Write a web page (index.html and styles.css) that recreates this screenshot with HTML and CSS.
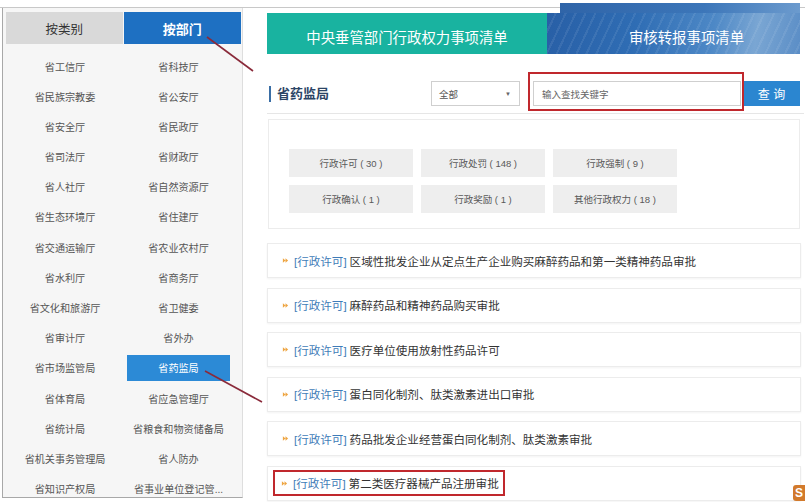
FILE: index.html
```html
<!DOCTYPE html>
<html lang="zh-CN">
<head>
<meta charset="utf-8">
<title>省药监局</title>
<link rel="stylesheet" href="styles.css">
</head>
<body>
<div class="page">
  <aside class="sidebar">
    <div class="tabs">
      <div class="tab">按类别</div>
      <div class="tab active">按部门</div>
    </div>
    <ul class="dept-grid">
      <li>省工信厅</li><li>省科技厅</li>
      <li>省民族宗教委</li><li>省公安厅</li>
      <li>省安全厅</li><li>省民政厅</li>
      <li>省司法厅</li><li>省财政厅</li>
      <li>省人社厅</li><li>省自然资源厅</li>
      <li>省生态环境厅</li><li>省住建厅</li>
      <li>省交通运输厅</li><li>省农业农村厅</li>
      <li>省水利厅</li><li>省商务厅</li>
      <li>省文化和旅游厅</li><li>省卫健委</li>
      <li>省审计厅</li><li>省外办</li>
      <li>省市场监管局</li><li class="current">省药监局</li>
      <li>省体育局</li><li>省应急管理厅</li>
      <li>省统计局</li><li>省粮食和物资储备局</li>
      <li>省机关事务管理局</li><li>省人防办</li>
      <li>省知识产权局</li><li>省事业单位登记管...</li>
    </ul>
  </aside>

  <main class="main">
    <div class="header-tabs">
      <div class="htab teal">中央垂管部门行政权力事项清单</div>
      <div class="htab photo">审核转报事项清单</div>
    </div>

    <div class="title-row">
      <h2 class="title">省药监局</h2>
      <div class="select"><span>全部</span><span class="caret">▼</span></div>
      <div class="search">
        <div class="input">输入查找关键字</div>
        <div class="btn">查 询</div>
        <span class="annot-box"></span>
      </div>
    </div>

    <div class="cats">
      <div class="cat">行政许可 ( 30 )</div>
      <div class="cat">行政处罚 ( 148 )</div>
      <div class="cat">行政强制 ( 9 )</div>
      <div class="cat">行政确认 ( 1 )</div>
      <div class="cat">行政奖励 ( 1 )</div>
      <div class="cat">其他行政权力 ( 18 )</div>
    </div>

    <ul class="items">
      <li><span class="row"><svg class="ico" viewBox="0 0 8 8"><path d="M1 1.5 L4 4 L1 6.5 Z M4 1.5 L7 4 L4 6.5 Z" fill="#eea542"/></svg><span class="tag">[行政许可]</span> 区域性批发企业从定点生产企业购买麻醉药品和第一类精神药品审批</span></li>
      <li><span class="row"><svg class="ico" viewBox="0 0 8 8"><path d="M1 1.5 L4 4 L1 6.5 Z M4 1.5 L7 4 L4 6.5 Z" fill="#eea542"/></svg><span class="tag">[行政许可]</span> 麻醉药品和精神药品购买审批</span></li>
      <li><span class="row"><svg class="ico" viewBox="0 0 8 8"><path d="M1 1.5 L4 4 L1 6.5 Z M4 1.5 L7 4 L4 6.5 Z" fill="#eea542"/></svg><span class="tag">[行政许可]</span> 医疗单位使用放射性药品许可</span></li>
      <li><span class="row"><svg class="ico" viewBox="0 0 8 8"><path d="M1 1.5 L4 4 L1 6.5 Z M4 1.5 L7 4 L4 6.5 Z" fill="#eea542"/></svg><span class="tag">[行政许可]</span> 蛋白同化制剂、肽类激素进出口审批</span></li>
      <li><span class="row"><svg class="ico" viewBox="0 0 8 8"><path d="M1 1.5 L4 4 L1 6.5 Z M4 1.5 L7 4 L4 6.5 Z" fill="#eea542"/></svg><span class="tag">[行政许可]</span> 药品批发企业经营蛋白同化制剂、肽类激素审批</span></li>
      <li><span class="row hl"><svg class="ico" viewBox="0 0 8 8"><path d="M1 1.5 L4 4 L1 6.5 Z M4 1.5 L7 4 L4 6.5 Z" fill="#eea542"/></svg><span class="tag">[行政许可]</span> 第二类医疗器械产品注册审批</span></li>
    </ul>
  </main>

  <svg class="arrows" width="805" height="502" viewBox="0 0 805 502">
    <line x1="207" y1="29" x2="253" y2="63" stroke="#8a2a3a" stroke-width="1.6"/>
    <line x1="205" y1="363" x2="262" y2="394" stroke="#8a2a3a" stroke-width="1.6"/>
  </svg>
  <div class="sohu">S</div>
</div>
</body>
</html>
```

FILE: styles.css
```css
* { box-sizing: border-box; }
html, body {
  margin: 0;
  padding: 0;
  background: #fff;
  width: 805px;
  height: 502px;
  overflow: hidden;
  font-family: "Liberation Sans", "Noto Sans CJK SC", sans-serif;
}
ul { list-style: none; margin: 0; padding: 0; }

.page {
  position: relative;
  display: flex;
  margin-top: 7px;
  border-top: 1px solid #c8c8c8;
  height: 495px;
}

/* ---------- sidebar ---------- */
.sidebar {
  width: 241px;
  height: 490px;
  margin-left: 2px;
  border: 1px solid #a8a8a8;
  border-top: none;
  border-right-color: #dedede;
  background: #f6f6f6;
  padding: 4px 1px 0 3px;
  overflow: hidden;
  flex-shrink: 0;
}
.tabs {
  display: flex;
  gap: 1px;
}
.tab {
  width: 117px;
  height: 32px;
  display: flex;
  align-items: center;
  justify-content: center;
  background: #d9d9d9;
  color: #333;
  font-size: 12.5px;
}
.tab.active {
  width: 118px;
  background: #1e70c2;
  color: #fff;
  font-weight: bold;
  font-size: 13px;
}
.dept-grid {
  display: grid;
  grid-template-columns: 118px 103px;
  column-gap: 3px;
  row-gap: 4.2px;
  margin-top: 9px;
}
.dept-grid li {
  height: 26px;
  display: flex;
  align-items: center;
  justify-content: center;
  font-size: 10.1px;
  color: #555;
  white-space: nowrap;
}
.dept-grid li.current {
  background: #2c8ad6;
  color: #fff;
}

/* ---------- main ---------- */
.main {
  margin-left: 24px;
  width: 537px;
  padding-top: 5px;
  flex-shrink: 0;
}
.header-tabs {
  display: flex;
  height: 41px;
}
.htab {
  display: flex;
  align-items: center;
  justify-content: center;
  color: #fff;
  font-size: 14.4px;
}
.htab.teal {
  width: 280px;
  background: #19b3a0;
  padding-top: 6px;
}
.htab.photo {
  position: relative;
  flex: 1;
  margin-right: 4px;
  padding-top: 6px;
  padding-left: 26px;
  background:
    repeating-linear-gradient(115deg, rgba(255,255,255,0) 0 7px, rgba(255,255,255,0.08) 7px 9px),
    linear-gradient(100deg, #285fa6 0%, #2f6db4 35%, #4d88c6 65%, #7aa6d3 82%, #5a8dc6 100%);
}
.htab.photo::before {
  content: "";
  position: absolute;
  top: -10px;
  left: 13px;
  right: 0;
  height: 10px;
  background: linear-gradient(100deg, #2f64a8 0%, #3c76b9 60%, #6c9bce 100%);
}

.title-row {
  display: flex;
  align-items: center;
  padding: 27px 4px 7px 0;
  border-bottom: 1px solid #e6e6e6;
}
.title {
  flex: 1;
  margin: 0 0 0 2px;
  padding-left: 6px;
  border-left: 2px solid #3a6ea5;
  line-height: 16px;
  font-size: 13px;
  font-weight: bold;
  color: #2c4566;
}
.select {
  width: 89px;
  height: 25px;
  border: 1px solid #cfcfcf;
  display: flex;
  align-items: center;
  justify-content: space-between;
  padding: 0 8px 0 7px;
  font-size: 9.5px;
  color: #555;
  margin-right: 13px;
}
.caret { font-size: 6px; color: #666; }
.search {
  position: relative;
  display: flex;
  height: 25px;
}
.input {
  width: 208px;
  border: 1px solid #cfcfcf;
  display: flex;
  align-items: center;
  padding-left: 8px;
  font-size: 9.5px;
  color: #666;
}
.btn {
  width: 57px;
  margin-left: 2px;
  background: #2b86d0;
  color: #fff;
  font-size: 12px;
  display: flex;
  align-items: center;
  justify-content: center;
}
.annot-box {
  position: absolute;
  left: -5px;
  top: -9px;
  width: 216px;
  bottom: -5px;
  border: 2px solid #c0282d;
}

.cats {
  margin: 5px 4px 0 1px;
  border: 1px solid #ececec;
  padding: 29px 0 15px 20px;
  display: grid;
  grid-template-columns: repeat(3, 124px);
  column-gap: 8px;
  row-gap: 8px;
}
.cat {
  height: 28px;
  background: #eeeeee;
  display: flex;
  align-items: center;
  justify-content: center;
  font-size: 9.5px;
  color: #595959;
}

.items {
  margin-top: 14px;
  display: flex;
  flex-direction: column;
  gap: 9.6px;
}
.items li {
  height: 35px;
  margin-right: 3px;
  border: 1px solid #ececec;
  box-shadow: 0 1px 2px rgba(0,0,0,0.05);
  display: flex;
  align-items: center;
  padding-left: 14px;
  font-size: 11.55px;
  color: #333;
  white-space: nowrap;
}
.row {
  display: inline-flex;
  align-items: center;
}
.ico {
  width: 7px;
  height: 7px;
  margin-right: 5px;
}
.tag { color: #3f7cb8; margin-right: 3px; }
.row.hl {
  margin-left: -9px;
  padding: 3px 4px 3px 6px;
  border: 2px solid #c0282d;
}

.arrows {
  position: absolute;
  left: 0;
  top: 0;
  pointer-events: none;
}
.sohu {
  position: absolute;
  right: 0;
  bottom: 1px;
  width: 12px;
  height: 16px;
  border-radius: 3px 0 0 3px;
  background: #d27a2c;
  color: #fff;
  font-weight: bold;
  font-size: 12px;
  line-height: 16px;
  text-align: center;
}
```
